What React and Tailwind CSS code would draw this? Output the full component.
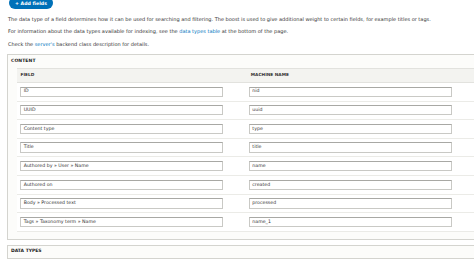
const ROWS = [
  ['ID', 'nid'],
  ['UUID', 'uuid'],
  ['Content type', 'type'],
  ['Title', 'title'],
  ['Authored by » User » Name', 'name'],
  ['Authored on', 'created'],
  ['Body » Processed text', 'processed'],
  ['Tags » Taxonomy term » Name', 'name_1'],
]

function TextInput({ value }) {
  return (
    <div className="w-[203px] h-[10.3px] flex items-center px-[2.5px] bg-white border border-[#c9c9c5] border-t-[#a8a8a4] text-[4.7px] leading-none text-[#333]">
      {value}
    </div>
  )
}

export default function App() {
  return (
    <div className="w-[474px] h-[260px] overflow-hidden bg-white font-['DejaVu_Sans',sans-serif] text-[#333] leading-none">
      <div className="px-[8px]">
        <button className="block mt-[-3px] ml-[1px] h-[12px] px-[6px] pt-[2.5px] rounded-full bg-[#0071b8] text-white text-[4.7px] font-bold leading-none">
          + Add fields
        </button>

        <p className="mt-[6px] text-[5px] leading-[8px]">
          The data type of a field determines how it can be used for searching and filtering. The boost is used to give additional weight to certain fields, for example titles or tags.
        </p>
        <p className="mt-[4.3px] text-[5px] leading-[8px]">
          For information about the data types available for indexing, see the <span className="text-[#0074bd]">data types table</span> at the bottom of the page.
        </p>
        <p className="mt-[4.3px] text-[5px] leading-[8px]">
          Check the <span className="text-[#0074bd]">server's</span> backend class description for details.
        </p>
      </div>

      {/* Content fieldset */}
      <div className="mt-[6.3px] ml-[6.5px] w-[480px] border border-[#d4d4cf] bg-[#fcfcfa] pb-[6.5px]">
        <div className="h-[12.7px] flex items-center pl-[3.5px] text-[4.5px] font-bold tracking-[0.1px] text-[#222]">CONTENT</div>
        <div className="ml-[9px] bg-white">
          <div className="grid grid-cols-[228.3px_1fr] h-[15.3px] items-center bg-[#f3f3f0] border-t border-b border-[#e2e2de] text-[4.3px] font-bold text-[#333]">
            <div className="pl-[4px]">FIELD</div>
            <div className="pl-[6px]">MACHINE NAME</div>
          </div>
          {ROWS.map(([label, machine]) => (
            <div key={machine} className="grid grid-cols-[228.3px_1fr] h-[18.65px] items-center border-b border-[#ebebe7]">
              <div className="pl-[3.7px]"><TextInput value={label} /></div>
              <div className="pl-[4px]"><TextInput value={machine} /></div>
            </div>
          ))}
        </div>
      </div>

      {/* Data types details */}
      <div className="mt-[5px] ml-[6.5px] w-[480px] h-[14px] border border-[#d4d4cf] bg-[#fcfcfa] flex items-center pl-[3.5px] text-[4.5px] font-bold text-[#222]">
        DATA TYPES
      </div>
    </div>
  )
}
